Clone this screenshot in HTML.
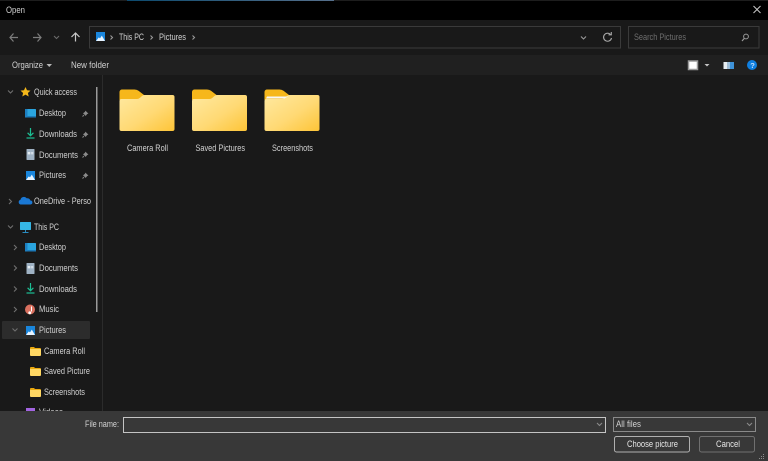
<!DOCTYPE html>
<html><head><meta charset="utf-8"><style>
html,body{margin:0;padding:0;background:#191919;width:768px;height:461px;overflow:hidden}
svg{display:block;filter:blur(.3px)}
text{font-family:"Liberation Sans",sans-serif;font-size:9px;fill:#d2d2d2}
.s{fill:none;stroke:#9a9a9a;stroke-width:1.1}
.c{fill:none;stroke:#6f6f6f;stroke-width:1.1}
</style></head><body>
<svg width="768" height="461" viewBox="0 0 768 461" xmlns="http://www.w3.org/2000/svg">
<defs>
<linearGradient id="fg" x1="0" y1="0" x2="1" y2="1"><stop offset="0" stop-color="#ffe9a0"/><stop offset="0.55" stop-color="#ffd974"/><stop offset="1" stop-color="#fdc437"/></linearGradient>
<linearGradient id="top" x1="0" y1="0" x2="1" y2="0"><stop offset="0" stop-color="#0c4a6e"/><stop offset="1" stop-color="#56708c"/></linearGradient>
<symbol id="pic" viewBox="0 0 9 9" width="9" height="9"><rect width="9" height="9" fill="#1a86dc"/><path d="M0 9 L2.800 5.400 L4 6.400 L5.800 3.600 L9 9Z" fill="#e8f4ff"/></symbol>
<symbol id="desk" viewBox="0 0 11 9" width="11" height="9"><rect width="11" height="8.500" rx=".7" fill="#2aa4de"/><rect x="0" y="0" width="2.500" height="8.500" fill="#1d7fc0"/><rect x="2.500" y="7" width="8.500" height="1.500" fill="#1b79b8"/></symbol>
<symbol id="dl" viewBox="0 0 9 11" width="9" height="11"><path d="M4.500 0V7.600M1.600 4.800L4.500 7.800L7.400 4.800" fill="none" stroke="#1cbf94" stroke-width="1.200"/><rect x="0.500" y="9.400" width="8" height="1.200" fill="#1cbf94"/></symbol>
<symbol id="doc" viewBox="0 0 8 11" width="8" height="11"><rect width="8" height="11" rx=".5" fill="#9fb2c4"/><rect x="1.200" y="3" width="2.600" height="2.400" fill="#e4ecf2"/><rect x="4.600" y="3" width="2.200" height="2.400" fill="#d2dce6"/></symbol>
<symbol id="pin" viewBox="0 0 7 7" width="7" height="7"><path d="M3.400.6L6.400 3.600L5.200 4 4.200 5.200 3.800 6 1 3.200 1.800 2.800 3 1.800Z" fill="#8a8a8a"/><path d="M1.900 5.100L.5 6.500" stroke="#8a8a8a"/></symbol>
<symbol id="sf" viewBox="0 0 11 9" width="11" height="9"><path d="M0 1a1 1 0 0 1 1-1H4L5 1H10a1 1 0 0 1 1 1V2H0Z" fill="#e9a80f"/><path d="M0 2H11V8a1 1 0 0 1-1 1H1a1 1 0 0 1-1-1Z" fill="#ffd763"/></symbol>
<symbol id="folder" viewBox="0 0 55 42" width="55" height="42"><path d="M0 3A2.500 2.500 0 0 1 2.500 .5H15Q17.500 .5 19 1.800L24.500 6 24.500 11H0Z" fill="#f6b71b"/><path d="M0 12Q0 10 2 10L17.500 10Q19 10 20.500 8.700L22.500 7Q23.500 6 25 6H53a2 2 0 0 1 2 2V40a2 2 0 0 1-2 2H2a2 2 0 0 1-2-2Z" fill="url(#fg)"/></symbol>
</defs>

<!-- base -->
<rect width="768" height="461" fill="#191919"/>
<rect width="768" height="20" fill="#000"/>
<rect x="0" y="0" width="768" height="1" fill="#1d1d1d"/>
<rect x="127" y="0" width="207" height="1" fill="url(#top)"/>
<rect y="20" width="768" height="35" fill="#191919"/>
<rect y="55" width="768" height="20" fill="#202020"/>
<rect y="75" width="768" height="336" fill="#191919"/>

<!-- title -->
<text x="6" y="13" textLength="19" lengthAdjust="spacingAndGlyphs" fill="#e0e0e0">Open</text>
<path d="M753.500 6L760.500 13M760.500 6L753.500 13" stroke="#c8c8c8" stroke-width="1" fill="none"/>

<!-- nav -->
<path d="M18 37.500H10M13.500 33.500L10 37.500L13.500 41.500" fill="none" stroke="#7d7d7d" stroke-width="1.200"/>
<path d="M33 37.500H41M37.500 33.500L41 37.500L37.500 41.500" fill="none" stroke="#7d7d7d" stroke-width="1.200"/>
<path d="M54 36L56.500 38.500L59 36" fill="none" stroke="#6b6b6b" stroke-width="1.100"/>
<path d="M75.500 41.500V33.500M71.500 37L75.500 33L79.500 37" fill="none" stroke="#c8c8c8" stroke-width="1.200"/>

<rect x="89.500" y="26.500" width="531" height="21.500" fill="#191919" stroke="#3a3a3a"/>
<use href="#pic" x="96" y="32"/>
<path d="M110.500 35.500L112.500 37.500L110.500 39.500" class="s"/>
<text x="119" y="40" textLength="25" lengthAdjust="spacingAndGlyphs">This PC</text>
<path d="M150.500 35.500L152.500 37.500L150.500 39.500" class="s"/>
<text x="159" y="40" textLength="27" lengthAdjust="spacingAndGlyphs">Pictures</text>
<path d="M192.500 35.500L194.500 37.500L192.500 39.500" class="s"/>
<path d="M581 36.500L583.500 39L586 36.500" class="s"/>
<path d="M610.500 34.500A4 4 0 1 0 611.500 38" fill="none" stroke="#a8a8a8" stroke-width="1.100"/><path d="M608.500 34.800H611.300V32" fill="none" stroke="#a8a8a8" stroke-width="1.100"/>

<rect x="628.500" y="26.500" width="130.500" height="21.500" fill="#191919" stroke="#3a3a3a"/>
<text x="634" y="40" textLength="52" lengthAdjust="spacingAndGlyphs" style="fill:#6e6e6e">Search Pictures</text>
<circle cx="746" cy="36.500" r="2.400" fill="none" stroke="#9a9a9a"/><path d="M744.200 38.500L742 41" stroke="#9a9a9a" stroke-width="1.200"/>

<!-- command bar -->
<text x="12" y="68" textLength="31" lengthAdjust="spacingAndGlyphs">Organize</text>
<path d="M46.500 64L52 64L49.250 67Z" fill="#b8b8b8"/>
<text x="71" y="68" textLength="38" lengthAdjust="spacingAndGlyphs">New folder</text>
<rect x="688.500" y="61" width="9" height="8.500" fill="#fff" stroke="#9a9a9a" stroke-width="1.500"/>
<path d="M704.500 64L709.500 64L707 66.500Z" fill="#c4c4c4"/>
<rect x="723.500" y="62" width="10" height="7" fill="#e8eef2"/><rect x="729.500" y="62" width="4.500" height="7" fill="#3f93d8"/><rect x="727.500" y="62" width="1" height="7" fill="#5a8fb8"/>
<circle cx="752" cy="65" r="5" fill="#0f7fe0"/><text x="750.300" y="68" style="font-size:7.500px;fill:#bfe0ff;font-weight:bold">?</text>

<!-- sidebar dividers -->
<rect x="102" y="75" width="1" height="336" fill="#2b2b2b"/>
<rect x="96" y="87" width="1.500" height="225" fill="#9a9a9a"/>

<!-- selected -->
<rect x="2" y="321" width="88" height="18" rx="1" fill="#2c2c2c"/>

<!-- tree -->
<path d="M8 90.500L10.500 93L13 90.500" class="c"/>
<path d="M25.500 87L27 90.300 30.500 90.600 27.900 93 28.700 96.500 25.500 94.600 22.300 96.500 23.100 93 20.500 90.600 24 90.300Z" fill="#f5b81a"/>
<text x="34" y="95" textLength="43" lengthAdjust="spacingAndGlyphs">Quick access</text>

<use href="#desk" x="25" y="109"/><text x="39" y="116" textLength="27" lengthAdjust="spacingAndGlyphs">Desktop</text><use href="#pin" x="82" y="110"/>
<use href="#dl" x="26" y="128"/><text x="39" y="137" textLength="38" lengthAdjust="spacingAndGlyphs">Downloads</text><use href="#pin" x="82" y="131"/>
<use href="#doc" x="26.500" y="149"/><text x="39" y="158" textLength="39" lengthAdjust="spacingAndGlyphs">Documents</text><use href="#pin" x="82" y="151"/>
<use href="#pic" x="26" y="171"/><text x="39" y="178" textLength="27" lengthAdjust="spacingAndGlyphs">Pictures</text><use href="#pin" x="82" y="172"/>

<path d="M9 199L11.500 201.500L9 204" class="c"/>
<path d="M20.500 204.500a2.500 2.500 0 0 1 0-4.800a3.500 3.500 0 0 1 6.200-1.400a3 3 0 0 1 3.600 2.200a2 2 0 0 1 .2 4Z" fill="#1a78d4"/>
<text x="34" y="204" textLength="57" lengthAdjust="spacingAndGlyphs">OneDrive - Perso</text>

<path d="M8 225.500L10.500 228L13 225.500" class="c"/>
<rect x="20" y="222" width="11" height="8" rx=".6" fill="#35b6e4"/><path d="M25.500 230V232.500M22.500 232.500H28.500" stroke="#2b8cc0" stroke-width="1"/>
<text x="34" y="230" textLength="25" lengthAdjust="spacingAndGlyphs">This PC</text>

<path d="M14 245L16.500 247.500L14 250" class="c"/>
<use href="#desk" x="25" y="243"/><text x="39" y="250" textLength="27" lengthAdjust="spacingAndGlyphs">Desktop</text>
<path d="M14 265.500L16.500 268L14 270.500" class="c"/>
<use href="#doc" x="26.500" y="263"/><text x="39" y="271" textLength="39" lengthAdjust="spacingAndGlyphs">Documents</text>
<path d="M14 286.500L16.500 289L14 291.500" class="c"/>
<use href="#dl" x="26" y="283"/><text x="39" y="292" textLength="38" lengthAdjust="spacingAndGlyphs">Downloads</text>
<path d="M14 307L16.500 309.500L14 312" class="c"/>
<circle cx="30" cy="309.500" r="5" fill="#d9705f"/><path d="M31.500 306.500V311.500M29.700 311.800a1 1 0 1 0 .1 0" stroke="#fff" stroke-width="1" fill="#fff"/>
<text x="39" y="312" textLength="20" lengthAdjust="spacingAndGlyphs">Music</text>
<path d="M12.500 328.500L15 331L17.500 328.500" class="c"/>
<use href="#pic" x="26" y="326"/><text x="39" y="333" textLength="27" lengthAdjust="spacingAndGlyphs">Pictures</text>

<use href="#sf" x="30" y="347"/><text x="44" y="354" textLength="41" lengthAdjust="spacingAndGlyphs">Camera Roll</text>
<use href="#sf" x="30" y="367"/><text x="44" y="374" textLength="46" lengthAdjust="spacingAndGlyphs">Saved Picture</text>
<use href="#sf" x="30" y="388"/><text x="44" y="395" textLength="41" lengthAdjust="spacingAndGlyphs">Screenshots</text>
<rect x="26" y="408" width="9" height="4" fill="#a264e0"/>
<text x="39" y="415" textLength="24" lengthAdjust="spacingAndGlyphs">Videos</text>

<!-- folders -->
<use href="#folder" x="119.500" y="89"/>
<use href="#folder" x="192" y="89"/>
<use href="#folder" x="264.500" y="89"/>
<path d="M266 98.500L267 96.500H288L284.500 98.500Z" fill="#f7f7f7"/>
<text x="127" y="151" textLength="41" lengthAdjust="spacingAndGlyphs">Camera Roll</text>
<text x="195.500" y="151" textLength="49.500" lengthAdjust="spacingAndGlyphs">Saved Pictures</text>
<text x="272" y="151" textLength="41" lengthAdjust="spacingAndGlyphs">Screenshots</text>

<!-- footer -->
<rect y="411" width="768" height="50" fill="#383838"/>
<text x="85" y="427" textLength="34" lengthAdjust="spacingAndGlyphs">File name:</text>
<rect x="123.500" y="417.500" width="482" height="15" fill="#383838" stroke="#c4c4c4"/>
<path d="M597 423L599.500 425.500L602 423" stroke="#8a8a8a" stroke-width="1.100" fill="none"/>
<rect x="613.500" y="417.500" width="142" height="14" fill="#383838" stroke="#8a8a8a"/>
<text x="616" y="427" textLength="25" lengthAdjust="spacingAndGlyphs">All files</text>
<path d="M747 423L749.500 425.500L752 423" stroke="#8a8a8a" stroke-width="1.100" fill="none"/>
<rect x="614.500" y="436.500" width="75" height="15.500" rx="2" fill="#383838" stroke="#b0b0b0"/>
<text x="627" y="447" textLength="51" lengthAdjust="spacingAndGlyphs" style="fill:#e6e6e6">Choose picture</text>
<rect x="699.500" y="436.500" width="55" height="15.500" rx="2" fill="#383838" stroke="#707070"/>
<text x="716" y="447" textLength="24" lengthAdjust="spacingAndGlyphs" style="fill:#e6e6e6">Cancel</text>
<path d="M763 454h1v1h-1zM761 456h1v1h-1zM763 456h1v1h-1zM759 458h1v1h-1zM761 458h1v1h-1zM763 458h1v1h-1z" fill="#8c8c8c"/>
</svg>
</body></html>
